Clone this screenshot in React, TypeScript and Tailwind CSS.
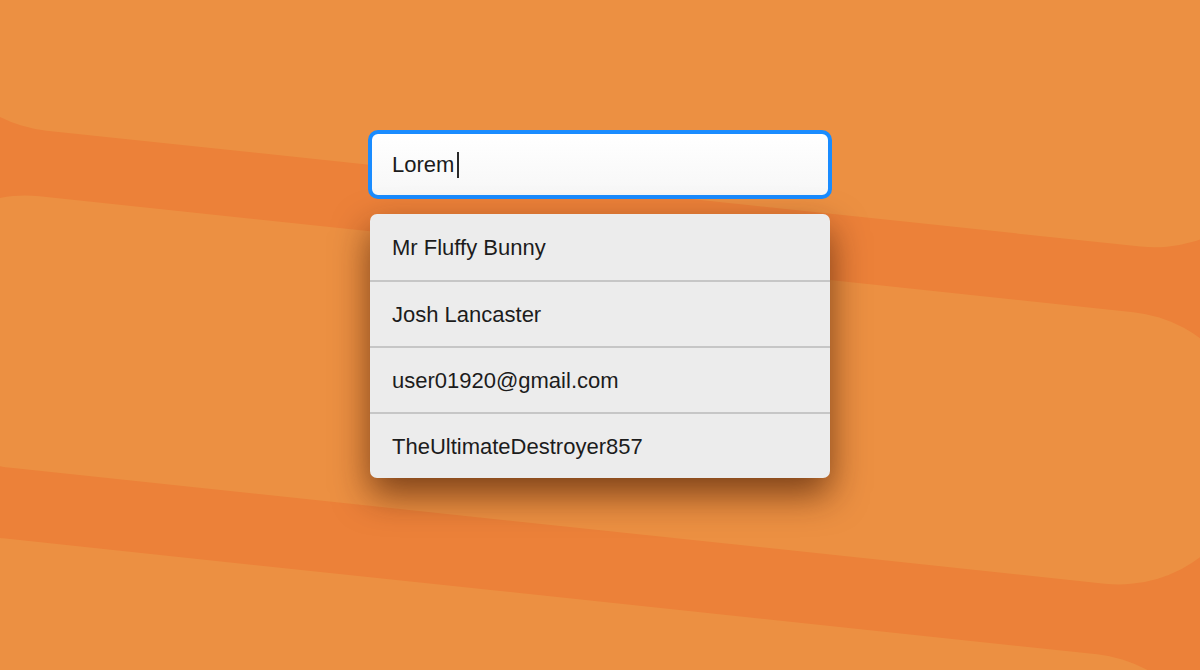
import React from 'react';

const suggestions = [
  'Mr Fluffy Bunny',
  'Josh Lancaster',
  'user01920@gmail.com',
  'TheUltimateDestroyer857',
];

function Backdrop() {
  // tilted rounded stripes behind everything
  return (
    <svg
      className="absolute inset-0 h-full w-full"
      viewBox="0 0 1200 670"
      preserveAspectRatio="none"
    >
      <rect width="1200" height="670" fill="#EC8139" />
      <g transform="rotate(6.05)" fill="#EC9042">
        <rect x="-75" y="-600" width="1370" height="725" rx="135" />
        <rect x="-75" y="191" width="1370" height="273" rx="135" />
        <rect x="-75" y="535" width="1370" height="600" rx="135" />
      </g>
    </svg>
  );
}

export default function App() {
  return (
    <div
      className="relative h-[670px] w-full overflow-hidden"
      style={{ fontFamily: '"Liberation Sans", Arial, sans-serif' }}
    >
      <Backdrop />

      <div className="relative flex flex-col items-center pt-[130px]">
        {/* search field */}
        <div className="flex h-[69px] w-[464px] items-center rounded-[10px] border-4 border-[#1A8CFF] bg-gradient-to-b from-white to-[#f7f7f7] px-5">
          <span className="text-[22px] leading-none text-[#1c1c1c]">Lorem</span>
          <span className="ml-[3px] inline-block h-[26px] w-[2px] bg-[#2a2a2a]" />
        </div>

        {/* suggestions */}
        <ul className="mt-[15px] w-[460px] overflow-hidden rounded-[7px] bg-[#ECECEC] shadow-[0_16px_36px_rgba(60,20,0,0.65)]">
          {suggestions.map((s, i) => (
            <li
              key={s}
              className={`flex h-[66px] items-center px-[22px] text-[22px] text-[#1c1c1c] ${
                i > 0 ? 'border-t-2 border-[#C6C6C6]' : ''
              }`}
            >
              {s}
            </li>
          ))}
        </ul>
      </div>
    </div>
  );
}
